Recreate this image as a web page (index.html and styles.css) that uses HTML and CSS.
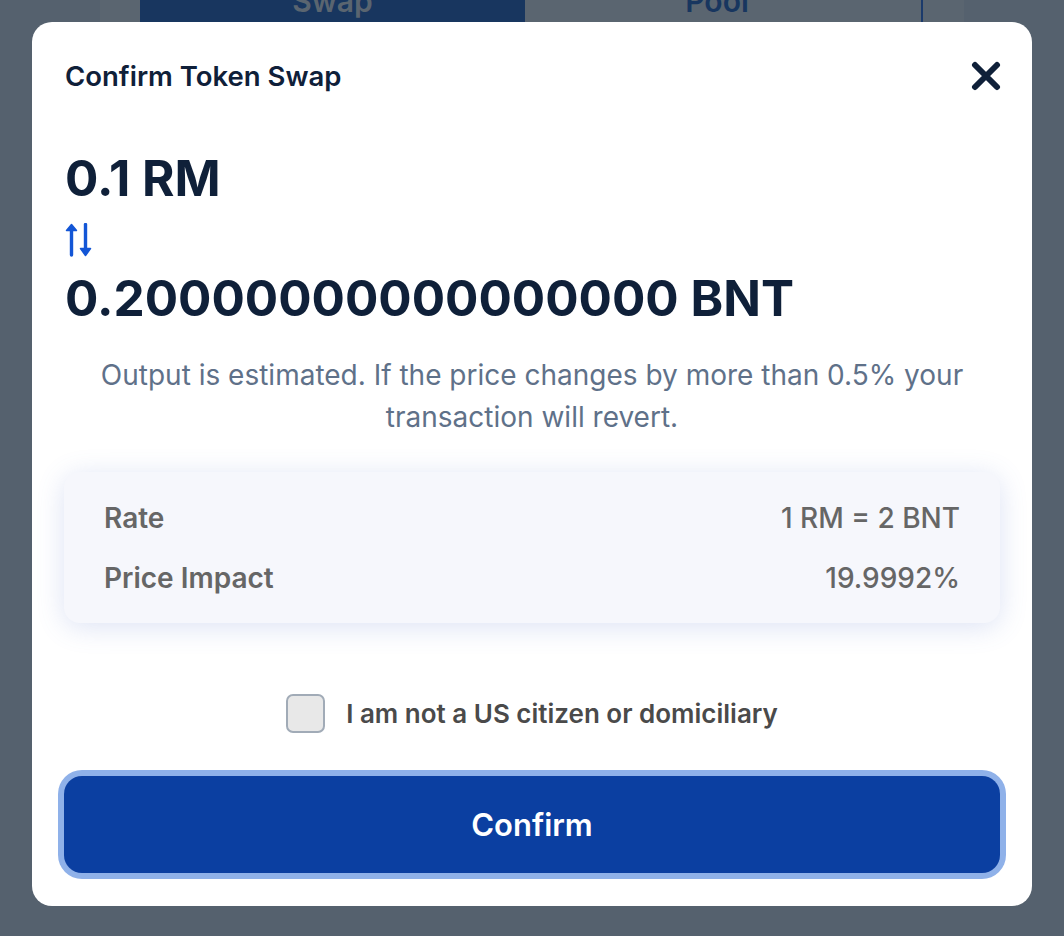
FILE: index.html
```html
<!DOCTYPE html>
<html lang="en">
<head>
<meta charset="utf-8">
<title>Confirm Token Swap</title>
<link rel="stylesheet" href="styles.css">
</head>
<body>
<div class="backdrop">
  <div class="bg-card">
    <div class="tabs">
      <div class="tab tab-active">Swap</div>
      <div class="tab tab-pool">Pool</div>
    </div>
  </div>
</div>
<div class="overlay">
  <div class="modal">
    <div class="modal-head">
      <h1 class="modal-title">Confirm Token Swap</h1>
      <button class="close-btn" aria-label="Close">
        <svg width="30" height="30" viewBox="0 0 30 30"><path d="M4 4 L26 26 M26 4 L4 26" stroke="#0f2039" stroke-width="6" stroke-linecap="round"/></svg>
      </button>
    </div>
    <div class="amount first">0.1 RM</div>
    <div class="swap-icon">
      <svg width="28" height="34" viewBox="0 0 28 34">
        <path d="M6.5 7 V32" stroke="#1356d6" stroke-width="3.4" stroke-linecap="round"/>
        <path d="M1.5 7.5 L6.5 1.5 L11.5 7.5 Z" fill="#1356d6" stroke="#1356d6" stroke-width="1.5" stroke-linejoin="round"/>
        <path d="M20.5 1.5 V26" stroke="#1356d6" stroke-width="3.4" stroke-linecap="round"/>
        <path d="M15.5 25.5 L20.5 32.5 L25.5 25.5 Z" fill="#1356d6" stroke="#1356d6" stroke-width="1.5" stroke-linejoin="round"/>
      </svg>
    </div>
    <div class="amount">0.20000000000000000 BNT</div>
    <p class="note">Output is estimated. If the price changes by more than 0.5% your transaction will revert.</p>
    <div class="details">
      <div class="row"><span>Rate</span><span class="val">1 RM = 2 BNT</span></div>
      <div class="row"><span>Price Impact</span><span class="val">19.9992%</span></div>
    </div>
    <label class="check">
      <span class="box"></span>
      <span class="check-label">I am not a US citizen or domiciliary</span>
    </label>
    <button class="confirm">Confirm</button>
  </div>
</div>
</body>
</html>
```
FILE: styles.css
```css
* { box-sizing: border-box; }
html, body { margin: 0; padding: 0; }
body {
  width: 1064px;
  height: 936px;
  overflow: hidden;
  background: #55616e;
  font-family: Inter, "Noto Sans", sans-serif;
  position: relative;
}
.backdrop {
  display: flex;
  justify-content: center;
}
.bg-card {
  width: 864px;
  height: 880px;
  background: #5a6570;
  padding: 0 41px 0 40px;
}
.tabs {
  display: flex;
  height: 37px;
  margin-top: -15px;
}
.tab {
  text-align: center;
  font-size: 30px;
  font-weight: 600;
  line-height: 32px;
  color: #18365f;
  overflow: hidden;
}
.tab-active {
  flex: 0 0 385px;
  background: #18365f;
  color: #5a6570;
}
.tab-pool {
  flex: 1;
  border-right: 2px solid #1b3a6b;
  padding-right: 12px;
}
.overlay {
  position: absolute;
  inset: 0;
  padding: 22px 32px 30px 32px;
}
.modal {
  background: #fff;
  border-radius: 20px;
  height: 884px;
  padding: 36px 32px 33px 32px;
  display: flex;
  flex-direction: column;
}
.modal-head {
  display: flex;
  align-items: center;
  justify-content: space-between;
  padding-left: 1px;
}
.modal-title {
  margin: 0;
  font-size: 27.5px;
  font-weight: 600;
  color: #0f2039;
  line-height: 36px;
}
.close-btn {
  border: none;
  background: none;
  padding: 0;
  width: 30px;
  height: 30px;
  margin-right: -1px;
  display: flex;
}
.amount {
  font-size: 49.5px;
  font-weight: 700;
  color: #0f2039;
  line-height: 56px;
  padding-left: 1px;
}
.amount.first { margin-top: 56px; }
.swap-icon {
  height: 64px;
  padding: 17px 0 0 1px;
}
.note {
  margin: 28px 0 0 0;
  text-align: center;
  font-size: 28px;
  line-height: 42px;
  color: #5f7189;
  padding: 0 30px;
}
.details {
  margin-top: 34px;
  background: #f6f7fc;
  border-radius: 16px;
  box-shadow: 0 4px 28px rgba(80, 110, 200, 0.2);
  padding: 28px 40px 27px 40px;
  display: flex;
  flex-direction: column;
  gap: 24px;
}
.row {
  display: flex;
  justify-content: space-between;
  font-size: 28px;
  line-height: 36px;
  font-weight: 600;
  color: #666666;
}
.row .val { font-weight: 500; }
.check {
  margin-top: 71px;
  display: flex;
  align-items: center;
  justify-content: center;
  gap: 21px;
}
.box {
  width: 39px;
  height: 39px;
  border: 2px solid #a1abb7;
  border-radius: 7px;
  background: #e8e8e8;
}
.check-label {
  font-size: 26px;
  font-weight: 600;
  color: #4a4a4a;
}
.confirm {
  margin-top: auto;
  height: 97px;
  border: none;
  border-radius: 18px;
  background: #0b3fa1;
  color: #fff;
  font-family: inherit;
  font-size: 31px;
  font-weight: 600;
  box-shadow: 0 0 0 6px #8fb1e9;
}
```
